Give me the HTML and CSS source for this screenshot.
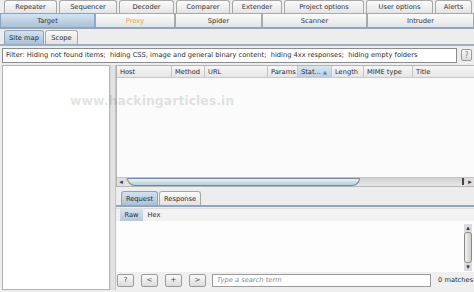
FILE: index.html
```html
<!DOCTYPE html>
<html>
<head>
<meta charset="utf-8">
<link rel="stylesheet" href="styles.css">
</head>
<body>
<div class="app">
  <div class="tabrow row1">
    <div class="tab w-rep">Repeater</div>
    <div class="tab w-seq">Sequencer</div>
    <div class="tab w-dec">Decoder</div>
    <div class="tab w-cmp">Comparer</div>
    <div class="tab w-ext">Extender</div>
    <div class="tab w-proj">Project options</div>
    <div class="tab w-user">User options</div>
    <div class="tab w-alert">Alerts</div>
  </div>
  <div class="tabrow row2">
    <div class="tab sel w-target">Target</div>
    <div class="tab proxy w-proxy">Proxy</div>
    <div class="tab w-spider">Spider</div>
    <div class="tab w-scanner">Scanner</div>
    <div class="tab w-intruder">Intruder</div>
  </div>
  <div class="sep"></div>
  <div class="subtabs">
    <div class="stab sel">Site map</div>
    <div class="stab">Scope</div>
  </div>
  <div class="sep2"></div>
  <div class="filterrow">
    <div class="filter">Filter: Hiding not found items;&nbsp; hiding CSS, image and general binary content;&nbsp; hiding 4xx responses;&nbsp; hiding empty folders</div>
    <div class="help">?</div>
  </div>
  <div class="main">
    <div class="tree"></div>
    <div class="vsplit"></div>
    <div class="right">
      <div class="table">
        <div class="thead">
          <div class="th c-host">Host</div>
          <div class="th c-method">Method</div>
          <div class="th c-url">URL</div>
          <div class="th c-params">Params</div>
          <div class="th c-stat sorted">Stat... <span class="arrow">▲</span></div>
          <div class="th c-len">Length</div>
          <div class="th c-mime">MIME type</div>
          <div class="th c-title">Title</div>
        </div>
        <div class="tbody"></div>
        <div class="hscroll">
          <div class="sarrow">◂</div>
          <div class="track"><div class="thumb"></div><div class="grip"></div></div>
          <div class="sarrow">▸</div>
        </div>
      </div>
      <div class="hsplit"></div>
      <div class="rrtabs">
        <div class="rtab sel">Request</div>
        <div class="rtab">Response</div>
      </div>
      <div class="rrline"></div>
      <div class="editor">
        <div class="rhtabs">
          <div class="htab sel">Raw</div>
          <div class="htab">Hex</div>
        </div>
        <div class="textarea">
          <div class="vscroll">
            <div class="varrow">▴</div>
            <div class="vthumb"></div>
            <div class="varrow">▾</div>
          </div>
        </div>
        <div class="searchbar">
          <div class="btn">?</div>
          <div class="btn">&lt;</div>
          <div class="btn">+</div>
          <div class="btn">&gt;</div>
          <div class="search">Type a search term</div>
          <div class="matches">0 matches</div>
        </div>
      </div>
    </div>
  </div>
  <div class="watermark">www.hackingarticles.in</div>
</div>
</body>
</html>
```
FILE: styles.css
```css
* { box-sizing: border-box; }
html, body { margin: 0; padding: 0; }
body {
  width: 474px; height: 292px; overflow: hidden;
  background: #ededed;
  font-family: "DejaVu Sans", sans-serif;
  font-size: 6.7px;
  color: #2a2a2a;
}
.app { position: relative; width: 474px; height: 292px; display: flex; flex-direction: column; }
.tabrow { display: flex; flex: none; }
.row1 { height: 13px; padding-left: 4px; gap: 2px; }
.row2 { height: 14px; }
.tab {
  flex: none;
  display: flex; align-items: center; justify-content: center;
  background: linear-gradient(#fbfbfb, #e4e4e4);
  border: 1px solid #a8a8a8;
  border-bottom: none;
  border-radius: 3px 3px 0 0;
  color: #333;
  white-space: nowrap;
}
.row1 .tab { height: 13px; }
.row2 .tab { height: 14px; border-radius: 0; }
.tab.sel { background: linear-gradient(#d6e3ef, #a9c1d9); border-color: #8aa4bd; }
.tab.proxy { color: #e8a23a; }
.w-rep { width: 53px; } .w-seq { width: 58px; } .w-dec { width: 55px; }
.w-cmp { width: 54px; } .w-ext { width: 50px; } .w-proj { width: 80px; }
.w-user { width: 67px; } .w-alert { width: 37px; }
.w-target { width: 95px; } .w-proxy { width: 80px; } .w-spider { width: 87px; }
.w-scanner { width: 105px; } .w-intruder { width: 107px; }
.sep { flex: none; height: 2px; background: #8fa6bc; }
.subtabs { flex: none; display: flex; height: 14px; padding-left: 4px; gap: 1px; margin-top: 1px; }
.stab {
  display: flex; align-items: center; justify-content: center;
  border: 1px solid #a8a8a8; border-bottom: none; border-radius: 3px 3px 0 0;
  background: linear-gradient(#fafafa, #e2e2e2);
}
.subtabs .stab:nth-child(1) { width: 40px; }
.subtabs .stab:nth-child(2) { width: 33px; }
.stab.sel { background: linear-gradient(#d3e1ee, #a9c1d9); border-color: #8aa4bd; }
.sep2 { flex: none; height: 2px; background: #9cb0c4; }
.filterrow { flex: none; display: flex; align-items: center; height: 17px; padding: 1px 2px 0 2px; gap: 4px; }
.filter {
  flex: none; width: 455px; height: 15px;
  background: #fff; border: 1px solid #8c8c8c;
  display: flex; align-items: center; padding-left: 3px;
  white-space: nowrap; overflow: hidden;
}
.help {
  width: 11px; height: 12px; border: 1px solid #9a9a9a; border-radius: 2px;
  background: linear-gradient(#fafafa, #dcdcdc); color: #888;
  display: flex; align-items: center; justify-content: center; font-size: 8px;
}
.main { flex: 1; display: flex; padding: 2px 0 2px 2px; min-height: 0; }
.tree { flex: none; width: 108px; background: #fff; border: 1px solid #b4b4b4; }
.vsplit { flex: none; width: 6px; border-left: 1px solid #d8d8d8; border-right: 1px solid #c4c4c4; background: #e2e2e2; }
.right { flex: 1; display: flex; flex-direction: column; min-width: 0; }
.table { flex: none; height: 122px; display: flex; flex-direction: column; border: 1px solid #b4b4b4; border-right: none; background: #fbfbfb; }
.thead { flex: none; display: flex; height: 12px; background: linear-gradient(#f6f6f6, #e6e6e6); border-bottom: 1px solid #c8c8c8; }
.th { flex: none; display: flex; align-items: center; padding-left: 3px; border-right: 1px solid #c4c4c4; white-space: nowrap; overflow: hidden; }
.c-host { width: 55px; } .c-method { width: 33px; } .c-url { width: 63px; }
.c-params { width: 30px; } .c-stat { width: 34px; } .c-len { width: 32px; }
.c-mime { width: 49px; } .c-title { flex: 1; border-right: none; }
.sorted { background: linear-gradient(#d8e5f1, #bccfe2); }
.arrow { font-size: 5px; color: #5a7ea3; margin-left: 2px; }
.tbody { flex: 1; }
.hscroll { flex: none; height: 9px; display: flex; align-items: center; background: #dedede; border-top: 1px solid #c4c4c4; }
.sarrow { width: 8px; font-size: 7px; color: #333; text-align: center; line-height: 8px; }
.track { flex: 1; height: 8px; position: relative; background: linear-gradient(#d0d0d0, #e8e8e8); }
.thumb { position: absolute; left: 2px; top: 0; width: 233px; height: 8px; border: 1px solid #6d8aa6; border-radius: 0 0 8px 8px; background: linear-gradient(#eaf1f7, #b9cde0); }
.grip { position: absolute; right: 2px; top: 0; width: 2px; height: 7px; background: #444; }
.hsplit { flex: none; height: 4px; }
.rrtabs { flex: none; display: flex; height: 14px; padding-left: 5px; gap: 1px; }
.rtab {
  display: flex; align-items: center; justify-content: center;
  border: 1px solid #a8a8a8; border-bottom: none; border-radius: 3px 3px 0 0;
  background: linear-gradient(#fafafa, #e2e2e2);
}
.rrtabs .rtab:nth-child(1) { width: 37px; }
.rrtabs .rtab:nth-child(2) { width: 42px; }
.rtab.sel { background: linear-gradient(#d3e1ee, #a9c1d9); border-color: #8aa4bd; }
.rrline { flex: none; height: 2px; background: #8fa6bc; }
.editor { flex: 1; display: flex; flex-direction: column; min-height: 0; padding-top: 1px; }
.rhtabs { flex: none; display: flex; height: 13px; padding-left: 4px; background: #f2f2f2; border-top: 1px solid #dcdcdc; }
.htab { display: flex; align-items: center; justify-content: center; }
.rhtabs .htab:nth-child(1) { width: 23px; }
.rhtabs .htab:nth-child(2) { width: 22px; }
.htab.sel { background: linear-gradient(#d6e3ef, #b4c9dd); }
.textarea { flex: 1; display: flex; justify-content: flex-end; padding: 3px 2px 1px 0; background: #fdfdfd; }
.vscroll { width: 8px; display: flex; flex-direction: column; background: #dcdcdc; }
.varrow { height: 8px; font-size: 7px; text-align: center; line-height: 8px; color: #333; }
.vthumb { flex: 1; border: 1px solid #8a8a8a; border-radius: 3px; background: linear-gradient(90deg, #f2f2f2, #cdcdcd); }
.searchbar { flex: none; height: 18px; display: flex; align-items: center; padding: 0 0 2px 1px; background: #efefef; gap: 7px; }
.btn {
  flex: none; width: 17px; height: 13px;
  border: 1px solid #9a9a9a; border-radius: 2px;
  background: linear-gradient(#fafafa, #dcdcdc);
  display: flex; align-items: center; justify-content: center; font-size: 7px; color: #444;
}
.search {
  flex: none; width: 219px; height: 13px; margin-left: -1px;
  background: #fff; border: 1px solid #9a9a9a;
  display: flex; align-items: center; padding-left: 4px;
  font-style: italic; color: #8a8a8a;
}
.matches { flex: 1; text-align: right; padding-right: 2px; white-space: nowrap; }
.watermark {
  position: absolute; left: 70px; top: 93px;
  font-family: "DejaVu Sans", sans-serif; font-weight: bold; font-size: 12.5px;
  color: rgba(110,110,110,0.2);
}
```
